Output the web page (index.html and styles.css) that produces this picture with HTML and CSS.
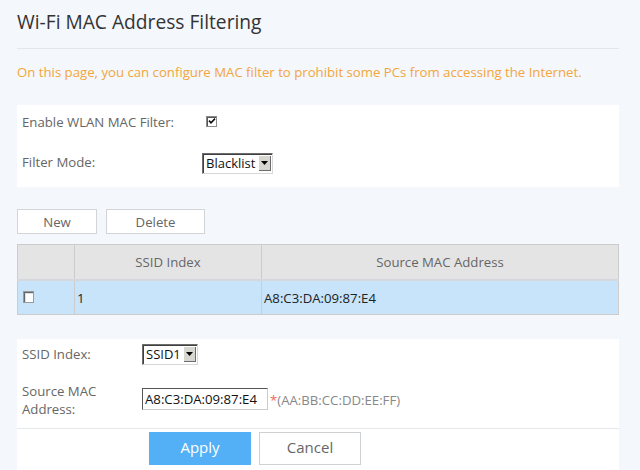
FILE: index.html
```html
<!DOCTYPE html>
<html lang="en">
<head>
<meta charset="utf-8">
<title>Wi-Fi MAC Address Filtering</title>
<link rel="stylesheet" href="styles.css">
</head>
<body>
<div class="page">
  <h1 class="title">Wi-Fi MAC Address Filtering</h1>
  <p class="notice">On this page, you can configure MAC filter to prohibit some PCs from accessing the Internet.</p>

  <div class="panel settings">
    <div class="row">
      <span class="label">Enable WLAN MAC Filter:</span>
      <span class="cb checked"><svg viewBox="0 0 8 8" width="8" height="8"><path d="M1 3.6 L3 5.8 L7 1.6" fill="none" stroke="#111" stroke-width="1.6"/></svg></span>
    </div>
    <div class="row">
      <span class="label">Filter Mode:</span>
      <span class="select sel-mode"><span class="sel-text">Blacklist</span><span class="sel-btn"><svg viewBox="0 0 7 4" width="7" height="4"><path d="M0 0 H7 L3.5 4 Z" fill="#000"/></svg></span></span>
    </div>
  </div>

  <div class="actions">
    <button class="btn btn-new">New</button>
    <button class="btn btn-delete">Delete</button>
  </div>

  <table class="grid">
    <thead>
      <tr><th class="c1"></th><th class="c2">SSID Index</th><th class="c3">Source MAC Address</th></tr>
    </thead>
    <tbody>
      <tr class="sel-row">
        <td class="c1"><span class="cb row-cb"></span></td>
        <td>1</td>
        <td>A8:C3:DA:09:87:E4</td>
      </tr>
    </tbody>
  </table>

  <div class="panel edit">
    <div class="edit-fields">
      <div class="frow">
        <span class="flabel">SSID Index:</span>
        <span class="select sel-ssid"><span class="sel-text">SSID1</span><span class="sel-btn"><svg viewBox="0 0 7 4" width="7" height="4"><path d="M0 0 H7 L3.5 4 Z" fill="#000"/></svg></span></span>
      </div>
      <div class="frow">
        <span class="flabel">Source MAC Address:</span>
        <span class="input">A8:C3:DA:09:87:E4</span>
        <span class="req">*</span><span class="hint">(AA:BB:CC:DD:EE:FF)</span>
      </div>
    </div>
    <div class="buttons">
      <button class="btn-apply">Apply</button>
      <button class="btn-cancel">Cancel</button>
    </div>
  </div>
</div>
</body>
</html>
```

FILE: styles.css
```css
html, body {
  margin: 0;
  background: #f4f7fb;
}
body {
  font-family: "Open Sans", "Noto Sans", sans-serif;
  font-size: 13.2px;
  color: #666;
}
.page {
  padding: 0 21px 0 17px;
}
.title {
  margin: 0;
  font-weight: normal;
  font-size: 19.2px;
  color: #333;
  line-height: 24px;
  padding: 10px 0 14px;
  border-bottom: 1px solid #e3e6ea;
}
.notice {
  margin: 13px 0 23px;
  line-height: 20px;
  color: #f3a63c;
}
.panel {
  background: #fff;
}
.settings {
  padding: 0 0 8px;
  display: flex;
  flex-direction: column;
  gap: 6px;
}
.row {
  display: flex;
  align-items: center;
  height: 34px;
}
.label {
  width: 180px;
  padding-left: 5px;
}
.cb {
  display: inline-flex;
  align-items: center;
  justify-content: center;
  box-sizing: border-box;
  background: #fff;
  border: 1px solid #8a8a8a;
  box-shadow: inset 1px 1px 0 #555;
}
.cb.checked {
  width: 11px;
  height: 11px;
  margin-left: 4px;
  margin-top: -2px;
}
.select {
  display: inline-flex;
  align-items: stretch;
  box-sizing: border-box;
  height: 21px;
  background: #fff;
  border-top: 1px solid #6d6d6d;
  border-left: 1px solid #6d6d6d;
  border-right: 1px solid #d8d8d8;
  border-bottom: 1px solid #d8d8d8;
  box-shadow: inset 1px 1px 0 #404040;
  color: #111;
}
.sel-text {
  flex: 1;
  padding: 0 2px 0 3px;
  line-height: 19px;
  font-size: 13px;
}
.sel-btn {
  width: 11px;
  margin: 2px 1px 2px 0;
  background: #d8d6d0;
  border-right: 1px solid #6d6d6d;
  border-bottom: 1px solid #6d6d6d;
  display: flex;
  align-items: center;
  justify-content: center;
}
.sel-mode {
  width: 71px;
  margin-top: 2px;
}
.sel-ssid {
  width: 56px;
}
.actions {
  display: flex;
  gap: 9px;
  margin-top: 22px;
}
.btn {
  box-sizing: border-box;
  height: 25px;
  background: #fff;
  border: 1px solid #d2d4d6;
  color: #666;
  font-family: inherit;
  font-size: 13.2px;
  padding: 0;
}
.btn-new { width: 80px; }
.btn-delete { width: 99px; }
.grid {
  width: 100%;
  margin-top: 10px;
  border-collapse: collapse;
  border: 1px solid #cccccc;
}
.grid th {
  height: 34px;
  background: #e4e4e4;
  font-weight: normal;
  color: #666;
  border: 1px solid #cccccc;
  border-bottom: 2px solid #d4d8dc;
  padding: 0;
}
.grid .c1 { width: 54px; }
.grid .c2 { width: 186px; }
.grid td {
  height: 33px;
  background: #c7e4fb;
  color: #222;
  border: 1px solid #cccccc;
  padding: 0 0 0 2px;
}
.row-cb {
  width: 11px;
  height: 12px;
  margin-left: 3px;
  margin-top: -3px;
  vertical-align: middle;
  border-color: #9a9a9a;
  box-shadow: inset 1px 1px 0 #666, inset 2px 2px 0 #e0e0e0;
}
.edit {
  margin-top: 24px;
  padding-top: 4px;
}
.edit-fields {
  display: flex;
  flex-direction: column;
  gap: 17px;
  padding-bottom: 10px;
  border-bottom: 1px solid #e6e9ec;
}
.frow {
  display: flex;
  align-items: center;
  min-height: 22px;
}
.flabel {
  width: 100px;
  padding-left: 5px;
  margin-right: 20px;
  line-height: 18px;
}
.input {
  box-sizing: border-box;
  width: 126px;
  height: 22px;
  line-height: 20px;
  padding-left: 2px;
  color: #111;
  background: #fff;
  border-top: 1px solid #555;
  border-left: 1px solid #555;
  border-right: 1px solid #ccc;
  border-bottom: 1px solid #ccc;
  margin-top: -3px;
}
.req {
  color: #f26b5b;
  margin-left: 2px;
}
.hint {
  color: #888;
}
.buttons {
  display: flex;
  gap: 8px;
  padding: 3px 0 6px 132px;
}
.btn-apply, .btn-cancel {
  box-sizing: border-box;
  width: 102px;
  height: 33px;
  font-family: inherit;
  font-size: 15px;
  padding: 0 0 3px;
}
.btn-apply {
  background: #54b0f6;
  border: 1px solid #54b0f6;
  color: #fff;
}
.btn-cancel {
  background: #fff;
  border: 1px solid #cfd2d5;
  color: #666;
}
```
